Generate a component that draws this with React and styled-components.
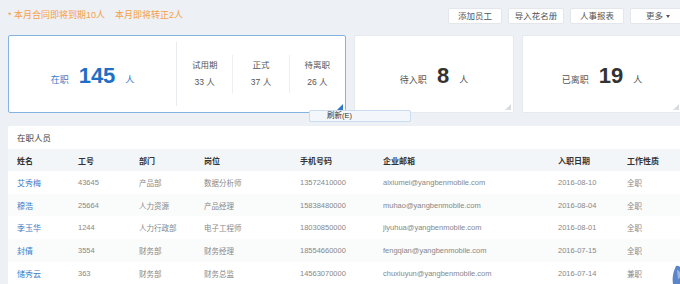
import React from "react";
import styled, { createGlobalStyle } from "styled-components";

const GlobalStyle = createGlobalStyle`
  html, body {
    margin: 0;
    padding: 0;
    background: #edf0f4;
    overflow: hidden;
  }
  body {
    font-family: "Liberation Sans", "Noto Sans CJK SC", sans-serif;
  }
`;

const Page = styled.div`
  width: 690px;
  height: 284px;
  padding: 0 4px 0 8px;
  box-sizing: border-box;
  position: relative;
  overflow: hidden;
`;

const TopBar = styled.div`
  display: flex;
  align-items: flex-start;
  justify-content: space-between;
  height: 35px;
  padding-top: 8px;
  box-sizing: border-box;
`;

const Notice = styled.div`
  font-size: 9px;
  line-height: 14px;
  color: #f5a04a;
  span + span {
    margin-left: 10px;
  }
`;

const Buttons = styled.div`
  display: flex;
  gap: 6px;
`;

const Button = styled.button`
  height: 16px;
  width: ${(p) => p.w}px;
  padding: 0;
  border: 1px solid #e3e6ea;
  border-radius: 2px;
  background: #fff;
  color: #555;
  font-family: inherit;
  font-size: 8.5px;
  line-height: 14px;
  display: flex;
  align-items: center;
  justify-content: center;
  gap: 3px;
`;

const Caret = styled.span`
  width: 0;
  height: 0;
  border-left: 2.5px solid transparent;
  border-right: 2.5px solid transparent;
  border-top: 3px solid #555;
`;

const Cards = styled.div`
  display: flex;
  gap: 8px;
  height: 78px;
`;

const Card = styled.div`
  position: relative;
  width: ${(p) => p.w}px;
  flex-shrink: 0;
  background: #fff;
  border: 1px solid ${(p) => (p.active ? "#84b3e2" : "#e6e9ee")};
  border-radius: 2px;
  box-sizing: border-box;
  display: flex;
  align-items: center;
`;

const Corner = styled.span`
  position: absolute;
  right: 2px;
  bottom: 2px;
  width: 0;
  height: 0;
  border-left: 6px solid transparent;
  border-bottom: 6px solid ${(p) => (p.active ? "#2f77c6" : "#d9dcdf")};
`;

const MainStat = styled.div`
  flex: ${(p) => (p.fixed ? "0 0 167px" : "1")};
  display: flex;
  align-items: baseline;
  justify-content: center;
  padding-top: 4px;
`;

const StatLabel = styled.span`
  font-size: 9px;
  color: ${(p) => (p.blue ? "#3a7bc8" : "#555")};
`;

const StatNumber = styled.span`
  font-size: 22px;
  font-weight: bold;
  margin: 0 10px;
  color: ${(p) => (p.blue ? "#1f6fc5" : "#333")};
`;

const SubStats = styled.div`
  flex: 1;
  align-self: stretch;
  margin: 6px 0;
  border-left: 1px solid #e9ecef;
  display: flex;
  align-items: center;
`;

const SubStat = styled.div`
  flex: 1;
  text-align: center;
  font-size: 8.5px;
  color: #555;
  padding: 2px 0;
  border-left: ${(p) => (p.first ? "none" : "1px solid #eceef1")};
  line-height: 17px;
`;

const Tooltip = styled.div`
  position: absolute;
  left: 309px;
  top: 110px;
  width: 102px;
  height: 12px;
  box-sizing: border-box;
  background: #f3f7fc;
  border: 1px solid #c9dcf0;
  border-radius: 2px;
  font-size: 7.5px;
  line-height: 10px;
  color: #333;
  padding-left: 17px;
  z-index: 2;
`;

const Panel = styled.div`
  margin-top: 13px;
  background: #fff;
  border-radius: 2px;
  height: 200px;
`;

const PanelTitle = styled.div`
  height: 23px;
  line-height: 24px;
  padding-left: 9px;
  font-size: 8.5px;
  color: #444;
`;

const cols = "61px 61px 65px 96px 83px 175px 69px 1fr";

const HeadRow = styled.div`
  display: grid;
  grid-template-columns: ${cols};
  height: 22px;
  align-items: center;
  padding-left: 9px;
  background: #f3f6f9;
  font-size: 8px;
  font-weight: bold;
  color: #333;
`;

const Row = styled.div`
  display: grid;
  grid-template-columns: ${cols};
  height: 22.7px;
  align-items: center;
  padding-left: 9px;
  background: ${(p) => (p.striped ? "#fafbfb" : "#fff")};
  font-size: 7.5px;
  color: #888;
`;

const Name = styled.span`
  color: #3a7bc8;
  font-size: 8px;
`;

const Cjk = styled.span`
  font-size: 7.5px;
`;

const Mascot = styled.svg`
  position: absolute;
  right: 8px;
  bottom: 0;
`;

const people = [
  ["艾秀梅", "43645", "产品部", "数据分析师", "13572410000", "aixiumei@yangbenmobile.com", "2016-08-10", "全职"],
  ["穆浩", "25664", "人力资源", "产品经理", "15838480000", "muhao@yangbenmobile.com", "2016-08-04", "全职"],
  ["季玉华", "1244", "人力行政部", "电子工程师", "18030850000", "jiyuhua@yangbenmobile.com", "2016-08-01", "全职"],
  ["封倩", "3554", "财务部", "财务经理", "18554660000", "fengqian@yangbenmobile.com", "2016-07-15", "全职"],
  ["储秀云", "363", "财务部", "财务总监", "14563070000", "chuxiuyun@yangbenmobile.com", "2016-07-14", "兼职"],
];

const headers = ["姓名", "工号", "部门", "岗位", "手机号码", "企业邮箱", "入职日期", "工作性质"];

export default function App() {
  return (
    <Page>
      <GlobalStyle />
      <TopBar>
        <Notice>
          <span>* 本月合同即将到期10人</span>
          <span>本月即将转正2人</span>
        </Notice>
        <Buttons>
          <Button w={54}>添加员工</Button>
          <Button w={56}>导入花名册</Button>
          <Button w={54}>人事报表</Button>
          <Button w={56}>
            更多 <Caret />
          </Button>
        </Buttons>
      </TopBar>

      <Cards>
        <Card w={338} active>
          <MainStat fixed>
            <StatLabel blue>在职</StatLabel>
            <StatNumber blue>145</StatNumber>
            <StatLabel blue>人</StatLabel>
          </MainStat>
          <SubStats>
            <SubStat first>
              试用期
              <br />
              33 人
            </SubStat>
            <SubStat>
              正式
              <br />
              37 人
            </SubStat>
            <SubStat>
              待离职
              <br />
              26 人
            </SubStat>
          </SubStats>
          <Corner active />
        </Card>
        <Card w={160}>
          <MainStat>
            <StatLabel>待入职</StatLabel>
            <StatNumber>8</StatNumber>
            <StatLabel>人</StatLabel>
          </MainStat>
          <Corner />
        </Card>
        <Card w={160}>
          <MainStat>
            <StatLabel>已离职</StatLabel>
            <StatNumber>19</StatNumber>
            <StatLabel>人</StatLabel>
          </MainStat>
          <Corner />
        </Card>
      </Cards>

      <Tooltip>刷新(E)</Tooltip>

      <Panel>
        <PanelTitle>在职人员</PanelTitle>
        <HeadRow>
          {headers.map((h) => (
            <span key={h}>{h}</span>
          ))}
        </HeadRow>
        {people.map((p, i) => (
          <Row key={p[0]} striped={i % 2 === 1}>
            <Name>{p[0]}</Name>
            <span>{p[1]}</span>
            <Cjk>{p[2]}</Cjk>
            <Cjk>{p[3]}</Cjk>
            <span>{p[4]}</span>
            <span>{p[5]}</span>
            <span>{p[6]}</span>
            <Cjk>{p[7]}</Cjk>
          </Row>
        ))}
      </Panel>

      <Mascot width="10" height="20" viewBox="0 0 10 20">
        <path d="M4 2 C8 1 10 5 10 9 L10 20 L1 20 C0 14 1 8 4 2 Z" fill="#5b85c9" />
        <path d="M5 6 C7 6 9 9 9 13 L6 15 Z" fill="#9ab8e6" />
      </Mascot>
    </Page>
  );
}
